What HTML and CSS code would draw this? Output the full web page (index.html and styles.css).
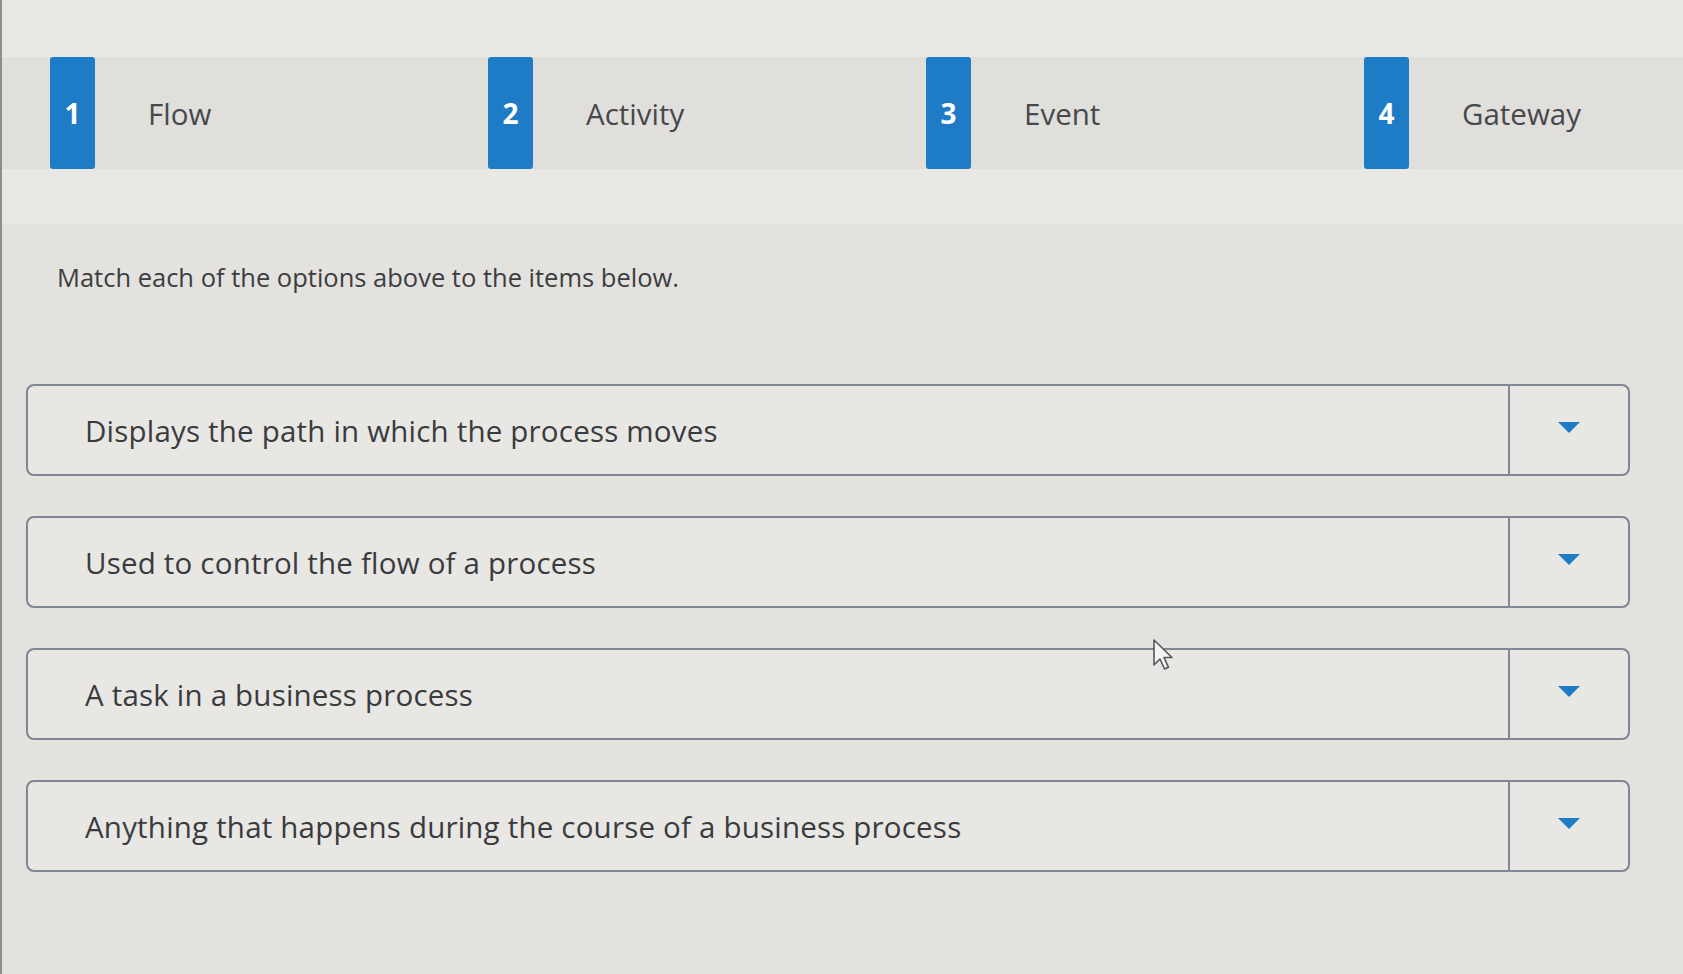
FILE: index.html
```html
<!DOCTYPE html>
<html lang="en">
<head>
    <meta charset="UTF-8">
    <meta name="viewport" content="width=device-width, initial-scale=1.0">
    <title>Matching</title>
    <link rel="stylesheet" href="styles.css">
</head>
<body>
    <div class="choices">
        <div class="choice-row">
            <div class="choice"><span class="badge">1</span><span class="choice-label">Flow</span></div>
            <div class="choice"><span class="badge">2</span><span class="choice-label">Activity</span></div>
            <div class="choice"><span class="badge">3</span><span class="choice-label">Event</span></div>
            <div class="choice"><span class="badge">4</span><span class="choice-label">Gateway</span></div>
        </div>
    </div>

    <div class="question">
        <p class="prompt">Match each of the options above to the items below.</p>

        <div class="match-list">
            <div class="match">
                <div class="match-text">Displays the path in which the process moves</div>
                <button class="match-select"><span class="caret"></span></button>
            </div>
            <div class="match">
                <div class="match-text">Used to control the flow of a process</div>
                <button class="match-select"><span class="caret"></span></button>
            </div>
            <div class="match">
                <div class="match-text">A task in a business process</div>
                <button class="match-select"><span class="caret"></span></button>
            </div>
            <div class="match">
                <div class="match-text">Anything that happens during the course of a business process</div>
                <button class="match-select"><span class="caret"></span></button>
            </div>
        </div>
    </div>

    <!-- mouse pointer -->
    <svg class="pointer" width="26" height="36" viewBox="0 0 26 36">
        <path d="M2 2 L2 27 L8 21 L12.5 31 L16.5 29.3 L12 19.5 L20 19.5 Z" fill="#f4f4f2" stroke="#55585c" stroke-width="1.6" stroke-linejoin="round"/>
    </svg>
</body>
</html>
```

FILE: styles.css
```css
* {
    margin: 0;
    padding: 0;
    box-sizing: border-box;
}

body {
    width: 1683px;
    height: 974px;
    overflow: hidden;
    background-color: #e3e2de;
    font-family: "Open Sans", Lato, sans-serif;
    color: #3a3b3e;
    position: relative;
    border-left: 2px solid #8d8e8f;
}

/* Options strip */
.choices {
    height: 224px;
    padding-top: 57px;
    background-color: #e9e8e4;
}

.choice-row {
    display: grid;
    grid-template-columns: repeat(4, 438px);
    height: 112px;
    background-color: #e0dfdb;
    padding-left: 48px;
    overflow: hidden;
}

.choice {
    display: flex;
    align-items: center;
    height: 112px;
}

.badge {
    width: 45px;
    height: 112px;
    background-color: #1e7bc6;
    color: #ffffff;
    border-radius: 3px;
    display: flex;
    align-items: center;
    justify-content: center;
    font-size: 28px;
    font-weight: 700;
}

.choice-label {
    margin-left: 53px;
    font-size: 29.5px;
    color: #47484c;
}

/* Question area */
.question {
    padding: 38px 53px 0 24px;
}

.prompt {
    padding-left: 31px;
    font-size: 25.5px;
    line-height: 30px;
    color: #3c3d40;
}

.match-list {
    display: flex;
    flex-direction: column;
    gap: 40px;
    margin-top: 92px;
}

.match {
    display: flex;
    height: 92px;
    border: 2px solid #7f8794;
    border-radius: 8px;
    background-color: #e8e7e3;
}

.match-text {
    flex: 1;
    display: flex;
    align-items: center;
    padding-left: 57px;
    font-size: 29.5px;
    letter-spacing: 0.2px;
    color: #3a3b3e;
}

.match-select {
    width: 120px;
    border: none;
    border-left: 2px solid #7f8794;
    background: transparent;
    display: flex;
    align-items: center;
    justify-content: center;
    padding-bottom: 6px;
}

.caret {
    width: 0;
    height: 0;
    border-left: 11px solid transparent;
    border-right: 11px solid transparent;
    border-top: 11px solid #1e7bc6;
}

.pointer {
    position: absolute;
    left: 1150px;
    top: 638px;
}
```
